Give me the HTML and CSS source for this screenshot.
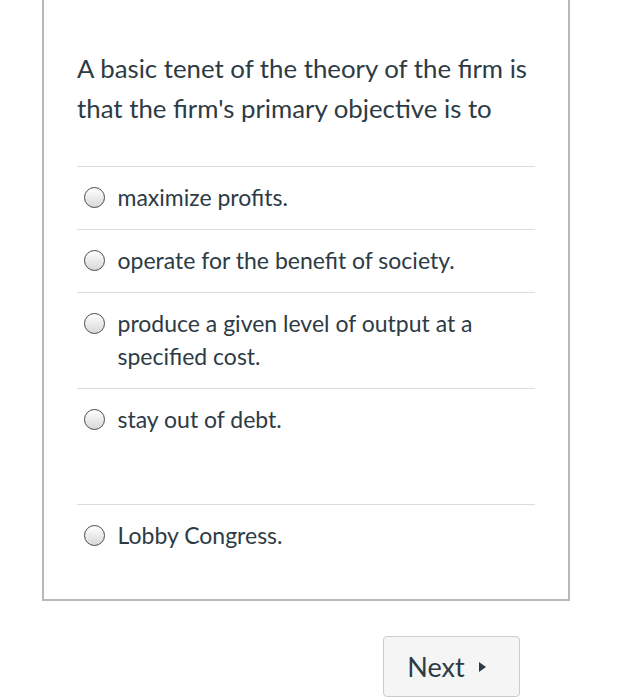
FILE: index.html
```html
<!DOCTYPE html>
<html lang="en">
<head>
  <meta charset="UTF-8">
  <meta name="viewport" content="width=device-width, initial-scale=1.0">
  <title>Quiz</title>
  <link rel="stylesheet" href="styles.css">
</head>
<body>
  <!-- question card -->
  <div class="question-card">
    <div class="question-text">
      A basic tenet of the theory of the firm is that the firm's primary objective is to
    </div>

    <div class="answers">
      <label class="answer">
        <span class="radio"></span>
        <span class="answer-text">maximize profits.</span>
      </label>
      <label class="answer">
        <span class="radio"></span>
        <span class="answer-text">operate for the benefit of society.</span>
      </label>
      <label class="answer">
        <span class="radio"></span>
        <span class="answer-text">produce a given level of output at a specified cost.</span>
      </label>
      <label class="answer answer-tall">
        <span class="radio"></span>
        <span class="answer-text">stay out of debt.</span>
      </label>
      <label class="answer">
        <span class="radio"></span>
        <span class="answer-text">Lobby Congress.</span>
      </label>
    </div>
  </div>

  <!-- navigation -->
  <div class="nav">
    <button class="next-btn">Next <span class="arrow"></span></button>
  </div>
</body>
</html>
```

FILE: styles.css
```css
body {
  margin: 0;
  font-family: Lato, "Open Sans", sans-serif;
  color: #2d3b45;
  background: #fff;
}
/* question card */
.question-card {
  width: 458px;
  margin-left: 42px;
  padding: 48px 33px 32px;
  border: 2px solid #b8b8b8;
  border-top: 0;
}
.question-text {
  font-size: 25.8px;
  line-height: 40px;
  margin-bottom: 38px;
}
/* answers */
.answer {
  display: flex;
  align-items: flex-start;
  border-top: 1px solid #dcdcdc;
  padding: 14px 0 15px;
  font-size: 23px;
  line-height: 33px;
}
.answer-tall {
  padding-bottom: 68px;
}
.radio {
  flex: none;
  width: 19px;
  height: 19px;
  margin: 5.5px 13px 0 6.5px;
  border: 1.5px solid #4a4a4a;
  border-radius: 50%;
  background: linear-gradient(#ffffff, #d8d8d8);
}
/* navigation */
.nav {
  display: flex;
  justify-content: flex-end;
  width: 520px;
  margin-top: 35px;
}
.next-btn {
  width: 137px;
  height: 61px;
  font-family: inherit;
  font-size: 27px;
  color: #2d3b45;
  background: #f5f5f5;
  border: 1px solid #c7cdd1;
  border-radius: 4px;
  display: flex;
  align-items: center;
  justify-content: center;
  gap: 14px;
  padding: 0 10px 0 0;
}
.arrow {
  width: 0;
  height: 0;
  border-top: 5px solid transparent;
  border-bottom: 5px solid transparent;
  border-left: 7px solid #2d3b45;
}
```
